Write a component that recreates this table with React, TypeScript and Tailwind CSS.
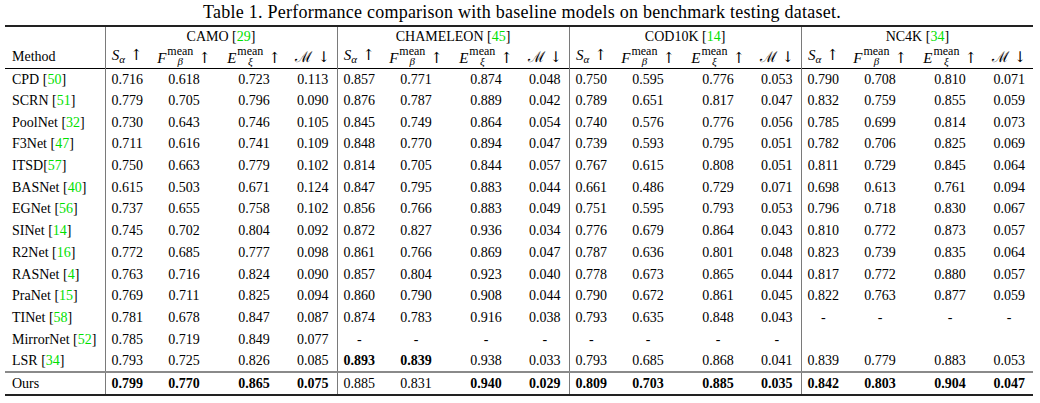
import React from 'react';

type Cell = string | { v: string; b: true };

interface Row {
  name: string;
  cite: string;
  sep?: boolean;
  vals: Cell[][];
}

const B = (v: string): Cell => ({ v, b: true });

const rows: Row[] = [
  { name: 'CPD', cite: '50', sep: true, vals: [['0.716', '0.618', '0.723', '0.113'], ['0.857', '0.771', '0.874', '0.048'], ['0.750', '0.595', '0.776', '0.053'], ['0.790', '0.708', '0.810', '0.071']] },
  { name: 'SCRN', cite: '51', sep: true, vals: [['0.779', '0.705', '0.796', '0.090'], ['0.876', '0.787', '0.889', '0.042'], ['0.789', '0.651', '0.817', '0.047'], ['0.832', '0.759', '0.855', '0.059']] },
  { name: 'PoolNet', cite: '32', sep: true, vals: [['0.730', '0.643', '0.746', '0.105'], ['0.845', '0.749', '0.864', '0.054'], ['0.740', '0.576', '0.776', '0.056'], ['0.785', '0.699', '0.814', '0.073']] },
  { name: 'F3Net', cite: '47', sep: true, vals: [['0.711', '0.616', '0.741', '0.109'], ['0.848', '0.770', '0.894', '0.047'], ['0.739', '0.593', '0.795', '0.051'], ['0.782', '0.706', '0.825', '0.069']] },
  { name: 'ITSD', cite: '57', vals: [['0.750', '0.663', '0.779', '0.102'], ['0.814', '0.705', '0.844', '0.057'], ['0.767', '0.615', '0.808', '0.051'], ['0.811', '0.729', '0.845', '0.064']] },
  { name: 'BASNet', cite: '40', sep: true, vals: [['0.615', '0.503', '0.671', '0.124'], ['0.847', '0.795', '0.883', '0.044'], ['0.661', '0.486', '0.729', '0.071'], ['0.698', '0.613', '0.761', '0.094']] },
  { name: 'EGNet', cite: '56', sep: true, vals: [['0.737', '0.655', '0.758', '0.102'], ['0.856', '0.766', '0.883', '0.049'], ['0.751', '0.595', '0.793', '0.053'], ['0.796', '0.718', '0.830', '0.067']] },
  { name: 'SINet', cite: '14', sep: true, vals: [['0.745', '0.702', '0.804', '0.092'], ['0.872', '0.827', '0.936', '0.034'], ['0.776', '0.679', '0.864', '0.043'], ['0.810', '0.772', '0.873', '0.057']] },
  { name: 'R2Net', cite: '16', sep: true, vals: [['0.772', '0.685', '0.777', '0.098'], ['0.861', '0.766', '0.869', '0.047'], ['0.787', '0.636', '0.801', '0.048'], ['0.823', '0.739', '0.835', '0.064']] },
  { name: 'RASNet', cite: '4', sep: true, vals: [['0.763', '0.716', '0.824', '0.090'], ['0.857', '0.804', '0.923', '0.040'], ['0.778', '0.673', '0.865', '0.044'], ['0.817', '0.772', '0.880', '0.057']] },
  { name: 'PraNet', cite: '15', sep: true, vals: [['0.769', '0.711', '0.825', '0.094'], ['0.860', '0.790', '0.908', '0.044'], ['0.790', '0.672', '0.861', '0.045'], ['0.822', '0.763', '0.877', '0.059']] },
  { name: 'TINet', cite: '58', sep: true, vals: [['0.781', '0.678', '0.847', '0.087'], ['0.874', '0.783', '0.916', '0.038'], ['0.793', '0.635', '0.848', '0.043'], ['-', '-', '-', '-']] },
  { name: 'MirrorNet', cite: '52', sep: true, vals: [['0.785', '0.719', '0.849', '0.077'], ['-', '-', '-', '-'], ['-', '-', '-', '-'], ['', '', '', '']] },
  { name: 'LSR', cite: '34', sep: true, vals: [['0.793', '0.725', '0.826', '0.085'], [B('0.893'), B('0.839'), '0.938', '0.033'], ['0.793', '0.685', '0.868', '0.041'], ['0.839', '0.779', '0.883', '0.053']] },
];

const ours: Cell[][] = [
  [B('0.799'), B('0.770'), B('0.865'), B('0.075')],
  ['0.885', '0.831', B('0.940'), B('0.029')],
  [B('0.809'), B('0.703'), B('0.885'), B('0.035')],
  [B('0.842'), B('0.803'), B('0.904'), B('0.047')],
];

const groups = [
  { name: 'CAMO', cite: '29' },
  { name: 'CHAMELEON', cite: '45' },
  { name: 'COD10K', cite: '14' },
  { name: 'NC4K', cite: '34' },
];

const Cite = ({ n }: { n: string }) => (
  <>
    [<span className="text-[#00e000]">{n}</span>]
  </>
);

// stacked super/subscript like F_beta^mean
const SupSub = ({ base, sub }: { base: string; sub: string }) => (
  <>
    <span className="italic text-[15px]">{base}</span>
    <span className="inline-flex flex-col leading-[11px] text-[12px] ml-[1px] align-[8px]">
      <span className="leading-[9px] h-[9px]">mean</span>
      <span className="italic text-[11px] leading-[11px]">{sub}</span>
    </span>
  </>
);

const Arrow = ({ up }: { up: boolean }) => (
  <span className="ml-[5px] font-['DejaVu_Serif'] text-[15px] leading-[16px]">{up ? '↑' : '↓'}</span>
);

const MetricHeads = () => (
  <>
    <td className="text-center border-l border-[#7a7a7a] whitespace-nowrap leading-[16px]">
      <span className="italic text-[15px]">S</span>
      <span className="italic text-[11px] align-[-3px]">α</span>
      <Arrow up />
    </td>
    <td className="text-center whitespace-nowrap leading-[16px]">
      <SupSub base="F" sub="β" />
      <Arrow up />
    </td>
    <td className="text-center whitespace-nowrap leading-[16px]">
      <SupSub base="E" sub="ξ" />
      <Arrow up />
    </td>
    <td className="text-center whitespace-nowrap leading-[16px]">
      <span className="font-['DejaVu_Serif'] text-[15px]">ℳ</span>
      <Arrow up={false} />
    </td>
  </>
);

const Val = ({ c, first }: { c: Cell; first: boolean }) => {
  const bold = typeof c !== 'string';
  const v = typeof c === 'string' ? c : c.v;
  return (
    <td className={`text-center ${bold ? 'font-bold' : ''} ${first ? 'border-l border-[#7a7a7a]' : ''}`}>
      {v}
    </td>
  );
};

const widths = [44, 70, 70, 48];

export default function App() {
  return (
    <div className="w-[1040px] h-[403px] bg-white text-black font-['Liberation_Serif'] text-[14px]">
      <div className="h-[25px] flex items-center justify-center text-[18px] tracking-[0.25px] pl-[4px]">
        Table 1. Performance comparison with baseline models on benchmark testing dataset.
      </div>
      <table className="ml-[5px] w-[1028px] table-fixed border-collapse">
        <colgroup>
          <col className="w-[100px]" />
          {groups.map((g) =>
            widths.map((w, i) => <col key={g.name + i} style={{ width: w }} />)
          )}
        </colgroup>
        <thead>
          <tr className="h-[21px] border-t-2 border-[#222]">
            <td />
            {groups.map((g) => (
              <td key={g.name} colSpan={4} className="text-center border-l border-[#7a7a7a] leading-[16px]">
                {g.name} <Cite n={g.cite} />
              </td>
            ))}
          </tr>
          <tr className="h-[21px] border-b border-black">
            <td className="pl-[7px] align-middle leading-[16px]">Method</td>
            {groups.map((g) => (
              <MetricHeads key={g.name} />
            ))}
          </tr>
        </thead>
        <tbody>
          {rows.map((r) => (
            <tr key={r.name} className="h-[21.7px]">
              <td className="pl-[7px] whitespace-nowrap">
                {r.name}
                {r.sep ? ' ' : ''}
                <Cite n={r.cite} />
              </td>
              {r.vals.map((g, gi) => g.map((c, ci) => <Val key={gi * 4 + ci} c={c} first={ci === 0} />))}
            </tr>
          ))}
          <tr className="h-[21px] border-t-2 border-t-[#8a8a8a] border-b-2 border-b-[#222]">
            <td className="pl-[7px]">Ours</td>
            {ours.map((g, gi) => g.map((c, ci) => <Val key={gi * 4 + ci} c={c} first={ci === 0} />))}
          </tr>
        </tbody>
      </table>
    </div>
  );
}
